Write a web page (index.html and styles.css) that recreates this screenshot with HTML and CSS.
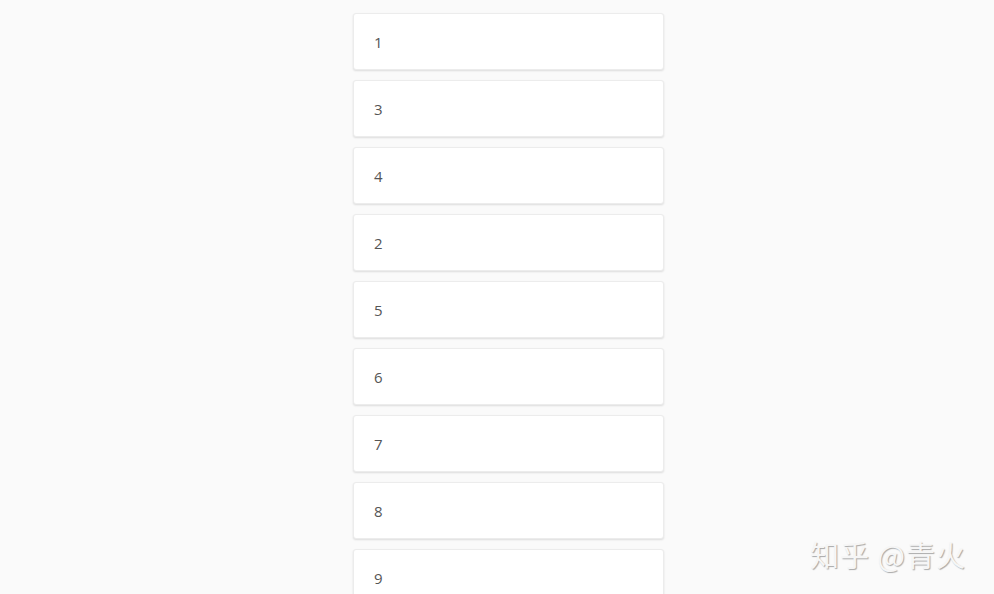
FILE: index.html
```html
<!DOCTYPE html>
<html>
<head>
<meta charset="utf-8">
<link rel="stylesheet" href="styles.css">
</head>
<body>
<div class="list">
  <div class="card">1</div>
  <div class="card">3</div>
  <div class="card">4</div>
  <div class="card">2</div>
  <div class="card">5</div>
  <div class="card">6</div>
  <div class="card">7</div>
  <div class="card">8</div>
  <div class="card">9</div>
</div>
<div class="watermark">知乎 @青火</div>
</body>
</html>
```
FILE: styles.css
```css
html, body {
  margin: 0;
  padding: 0;
  background: #fafafa;
  height: 594px;
  overflow: hidden;
}
.list {
  display: flex;
  flex-direction: column;
  gap: 10px;
  width: 311px;
  margin: 13px 0 0 353px;
}
.card {
  box-sizing: border-box;
  height: 57px;
  background: #fff;
  border-radius: 3px;
  border: 1px solid #ececec;
  box-shadow: 0 1px 2px rgba(0,0,0,0.12);
  padding: 1px 20px 0;
  display: flex;
  align-items: center;
  font-family: "Open Sans", "Noto Sans", sans-serif;
  font-size: 15px;
  color: #555;
}
.watermark {
  position: absolute;
  left: 810px;
  top: 533px;
  font-family: "Noto Sans CJK SC", "Noto Sans", sans-serif;
  font-size: 29px;
  letter-spacing: 1px;
  color: #f6f6f6;
  text-shadow: 1px 1px 1px #a8a8a8;
  white-space: nowrap;
}
```
